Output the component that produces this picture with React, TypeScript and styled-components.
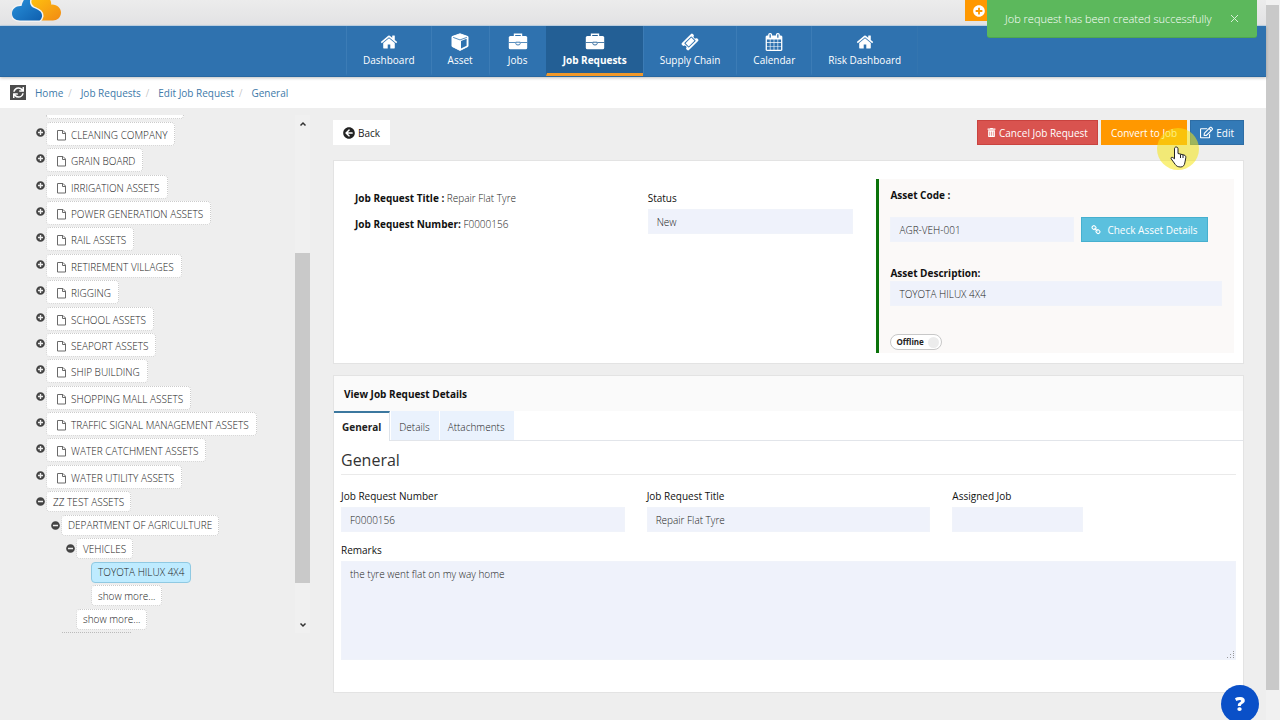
import React from "react";
import styled, { createGlobalStyle } from "styled-components";
import { FaPlusCircle, FaMinusCircle, FaArrowCircleLeft, FaTrashAlt, FaRegEdit, FaSync } from "react-icons/fa";

const Global = createGlobalStyle`
  * { box-sizing: border-box; }
  html, body, #root { height: 100%; margin: 0; }
  body {
    overflow: hidden;
    background: #eeeeee;
    font: 300 10px/16px "Open Sans", "Liberation Sans", sans-serif;
    color: #222;
  }
  button, input, textarea { font: inherit; color: inherit; margin: 0; border-radius: 0; }
  button { cursor: pointer; }
`;

const Screen = styled.div`
  display: flex;
  height: 100vh;
  overflow: hidden;
`;
const Page = styled.div`
  flex: 1;
  min-width: 0;
  display: flex;
  flex-direction: column;
`;
const PageScroll = styled.div`
  flex: none;
  width: 14px;
  padding: 5px 1px 30px 0;
  background: #f1f1f1;
`;
const ScrollThumb = styled.div`
  height: 100%;
  background: #c9c9c9;
`;

const TopBar = styled.header`
  flex: none;
  height: 26px;
  padding: 0 12px;
  background: linear-gradient(#ececec, #e2e2e4);
  border-bottom: 1px solid #c4d8ea;
  display: flex;
  align-items: flex-start;
  justify-content: space-between;
`;
const AddButton = styled.button`
  width: 60px;
  height: 21px;
  margin-right: 229px;
  padding: 0 8px;
  border: 0;
  background: #ff9800;
  color: #fff;
  display: flex;
  align-items: center;
`;

const Nav = styled.nav`
  flex: none;
  height: 51px;
  padding-left: 346px;
  display: flex;
  background: #2f72af;
  border-bottom: 1px solid #2868a2;
  box-shadow: 0 1px 3px rgba(0, 0, 0, 0.25);
  z-index: 1;
`;
const NavLink = styled.a<{ $active?: boolean }>`
  min-width: 57px;
  padding: 7px 16px 0;
  display: flex;
  flex-direction: column;
  align-items: center;
  gap: 1px;
  color: #fff;
  text-decoration: none;
  font-weight: ${(p) => (p.$active ? 700 : 400)};
  background: ${(p) => (p.$active ? "#235f95" : "transparent")};
  border-left: 1px solid ${(p) => (p.$active ? "#235f95" : "#3c7cb6")};
  border-bottom: 3px solid ${(p) => (p.$active ? "#f0982a" : "transparent")};
  &:last-child { border-right: 1px solid #3475af; }
`;

const Crumbs = styled.nav`
  flex: none;
  height: 31px;
  padding-left: 10px;
  display: flex;
  align-items: center;
  background: #fff;
  a { color: #4079a9; text-decoration: none; font-weight: 400; }
  span { color: #aaa; margin: 0 9px 0 5px; }
`;
const Refresh = styled.button`
  width: 16px;
  height: 15px;
  padding: 0;
  margin-right: 9px;
  border: 0;
  background: #4c4c4c;
  color: #fff;
  display: flex;
  align-items: center;
  justify-content: center;
`;

const Body = styled.div`
  flex: 1;
  min-height: 0;
  display: flex;
  padding-right: 22px;
`;
const Side = styled.aside`
  flex: none;
  width: 333px;
  height: 525px;
  padding: 7px 23px 0 36px;
  display: flex;
`;
const TreeView = styled.div`
  flex: 1;
  min-width: 0;
  overflow: hidden;
  display: flex;
  flex-direction: column;
`;
const TreeScroll = styled.div`
  flex: none;
  width: 15px;
  background: #f0f0f0;
  display: flex;
  flex-direction: column;
  align-items: center;
  padding: 5px 0 4px;
`;
const TreeThumb = styled.div`
  width: 15px;
  height: 330px;
  margin: auto 0 38px;
  background: #c9c9c9;
`;
const CutTop = styled.div`
  flex: none;
  width: 138px;
  height: 4px;
  margin: 0 0 3px 10px;
  background: #fff;
  border: 1px dotted #ccc;
  border-top: 0;
  border-radius: 0 0 4px 4px;
`;
const CutBottom = styled.div`
  flex: none;
  width: 69px;
  height: 1px;
  margin-left: 26px;
  border-top: 1px dotted #bbb;
`;
const TreeList = styled.div<{ $height: number }>`
  flex: none;
  height: ${(p) => p.$height}px;
  display: grid;
  grid-auto-rows: 1fr;
`;
const TreeRow = styled.div<{ $level: number }>`
  padding-left: ${(p) => p.$level * 15}px;
  display: flex;
  align-items: flex-start;
`;
const Toggle = styled.button<{ $tall?: boolean }>`
  flex: none;
  width: 10px;
  height: 21px;
  padding: 0;
  border: 0;
  background: none;
  color: #444;
  display: flex;
  align-items: center;
`;
const TreeLabel = styled.button<{ $tall?: boolean; $selected?: boolean }>`
  height: ${(p) => (p.$tall ? 24 : 21)}px;
  padding: ${(p) => (p.$tall ? "2px 7px 0 9px" : "0 6px")};
  border: 1px ${(p) => (p.$selected ? "solid #8fc9e2" : "dotted #ccc")};
  border-radius: 4px;
  background: ${(p) => (p.$selected ? "#beebff" : "#fff")};
  display: flex;
  align-items: center;
  gap: 4px;
  white-space: nowrap;
`;

const Content = styled.main`
  flex: 1;
  min-width: 0;
  padding-top: 12px;
`;
const Actions = styled.div`
  display: flex;
  gap: 3px;
  margin-bottom: 15px;
`;
const Button = styled.button<{ $bg: string; $fg?: string; $edge?: string }>`
  height: 25px;
  padding: 0 9px;
  border: 1px solid ${(p) => p.$edge ?? p.$bg};
  background: ${(p) => p.$bg};
  color: ${(p) => p.$fg ?? "#fff"};
  font-weight: 400;
  white-space: nowrap;
  display: flex;
  align-items: center;
  gap: 3px;
`;
const AssetButton = styled(Button)`
  gap: 6px;
`;
const Spacer = styled.div`
  flex: 1;
`;

const Card = styled.section`
  background: #fff;
  border: 1px solid #e3e3e3;
`;
const Summary = styled(Card)`
  height: 204px;
  margin-bottom: 11px;
  padding: 18px 9px 10px 21px;
  display: grid;
  grid-template-columns: 293fr 206fr 381fr;
`;
const Facts = styled.div`
  padding-top: 11px;
  display: flex;
  flex-direction: column;
  gap: 10px;
  strong { font-weight: 700; color: #111; }
`;
const Field = styled.div<{ $gap?: number }>`
  display: flex;
  flex-direction: column;
  gap: ${(p) => p.$gap ?? 3}px;
`;
const Label = styled.label<{ $bold?: boolean }>`
  font-weight: ${(p) => (p.$bold ? 700 : 400)};
  color: #111;
`;
const Input = styled.input`
  width: 100%;
  height: 25px;
  padding: 0 8px;
  border: 1px solid #f0f3fa;
  background: #eff2fb;
  outline: 0;
`;
const AssetPanel = styled.div`
  margin-left: 23px;
  padding: 8px 12px 0 11px;
  border-left: 3px solid #0a720a;
  background: #fbf9f8;
`;
const AssetLine = styled.div`
  display: grid;
  grid-template-columns: 184px auto;
  justify-content: start;
  gap: 7px;
  margin: 14px 0 23px;
`;
const Switch = styled.label`
  width: 52px;
  height: 16px;
  margin-top: 28px;
  padding: 0 2px 0 5px;
  border: 1px solid #c8c8c8;
  border-radius: 8px;
  background: #fff;
  font-size: 8px;
  font-weight: 700;
  display: flex;
  align-items: center;
  justify-content: space-between;
  input {
    appearance: none;
    width: 11px;
    height: 11px;
    margin: 0;
    border-radius: 50%;
    background: #ececec;
  }
`;

const Details = styled(Card)`
  height: 318px;
`;
const DetailsTitle = styled.h2`
  margin: 0;
  height: 35px;
  padding: 0 10px;
  background: #fafafa;
  font-size: 10px;
  line-height: 36px;
  font-weight: 700;
  color: #111;
`;
const Tabs = styled.div`
  height: 30px;
  display: flex;
  gap: 1px;
  border-bottom: 1px solid #e2e5ea;
`;
const Tab = styled.button<{ $active?: boolean }>`
  height: ${(p) => (p.$active ? 30 : 29)}px;
  padding: 0 8px;
  border: 0;
  border-top: 2px solid ${(p) => (p.$active ? "#3c789f" : "#eaf2fd")};
  border-right: 1px solid ${(p) => (p.$active ? "#dde3ea" : "#eaf2fd")};
  background: ${(p) => (p.$active ? "#fff" : "#eaf2fd")};
  font-weight: ${(p) => (p.$active ? 700 : 300)};
`;
const TabBody = styled.div`
  padding: 7px 7px 0;
`;
const Heading = styled.h3`
  margin: 0 0 13px;
  padding-bottom: 2px;
  border-bottom: 1px solid #eaeaea;
  font-size: 16px;
  line-height: 24px;
  font-weight: 400;
  color: #333;
`;
const FormGrid = styled.div`
  display: grid;
  grid-template-columns: 1fr 1fr 1fr;
  column-gap: 22px;
  margin-bottom: 10px;
`;
const ShortField = styled(Field)`
  width: 46%;
`;
const TextArea = styled.textarea`
  display: block;
  width: 100%;
  height: 99px;
  padding: 4px 8px;
  border: 1px solid #f0f3fa;
  background: #eff2fb;
  outline: 0;
  resize: none;
`;
const AreaWrap = styled.div`
  position: relative;
  svg { position: absolute; right: 1px; bottom: 1px; }
`;

const Toast = styled.div`
  position: fixed;
  top: 0;
  right: 23px;
  width: 270px;
  height: 38px;
  padding: 0 18px;
  background: #5cb85c;
  border-bottom: 1px solid #4fa74f;
  border-radius: 0 0 3px 3px;
  color: #fff;
  font-size: 11px;
  display: flex;
  align-items: center;
  justify-content: space-between;
  z-index: 3;
`;
const ToastClose = styled.button`
  padding: 0;
  border: 0;
  background: none;
  color: #d8f0d8;
  display: flex;
`;
const Help = styled.button`
  position: fixed;
  right: 21px;
  bottom: -3px;
  width: 38px;
  height: 38px;
  padding: 0;
  border: 0;
  border-radius: 50%;
  background: #0a50c8;
  color: #fff;
  font-size: 20px;
  font-weight: 800;
  z-index: 3;
`;
const Pointer = styled.div`
  position: fixed;
  top: 127px;
  left: 1156px;
  width: 44px;
  height: 44px;
  pointer-events: none;
  z-index: 3;
`;

const PATHS = {
  home: "M1472 992v480q0 26-19 45t-45 19h-384v-384h-256v384h-384q-26 0-45-19t-19-45v-480q0-1 .5-3t.5-3l575-474 575 474q1 2 1 6zm223-69l-62 74q-8 9-21 11h-3q-13 0-21-7l-692-577-692 577q-12 8-24 7-13-2-21-11l-62-74q-8-10-7-23.5t11-21.5l719-599q32-26 76-26t76 26l244 204v-195q0-14 9-23t23-9h192q14 0 23 9t9 23v408l219 182q10 8 11 21.5t-7 23.5z",
  ticket: "M1024 452l316 316-572 572-316-316zm-211 979l618-618q19-19 19-45t-19-45l-362-362q-18-18-45-18t-45 18l-618 618q-19 19-19 45t19 45l362 362q18 18 45 18t45-18zm889-637l-907 908q-37 37-90.5 37t-90.5-37l-126-126q56-56 56-136t-56-136-136-56-136 56l-125-126q-37-37-37-90.5t37-90.5l907-906q37-37 90.5-37t90.5 37l125 125q-56 56-56 136t56 136 136 56 136-56l126 125q37 37 37 90.5t-37 90.5z",
  calendar: "M192 1664h288v-288h-288v288zm352 0h320v-288h-320v288zm-352-352h288v-320h-288v320zm352 0h320v-320h-320v320zm-352-384h288v-288h-288v288zm736 736h320v-288h-320v288zm-384-736h320v-288h-320v288zm768 736h288v-288h-288v288zm-384-352h320v-320h-320v320zm-352-864v-288q0-13-9.5-22.5t-22.5-9.5h-64q-13 0-22.5 9.5t-9.5 22.5v288q0 13 9.5 22.5t22.5 9.5h64q13 0 22.5-9.5t9.5-22.5zm736 864h288v-320h-288v320zm-384-384h320v-288h-320v288zm384 0h288v-288h-288v288zm32-480v-288q0-13-9.5-22.5t-22.5-9.5h-64q-13 0-22.5 9.5t-9.5 22.5v288q0 13 9.5 22.5t22.5 9.5h64q13 0 22.5-9.5t9.5-22.5zm384-64v1280q0 52-38 90t-90 38h-1408q-52 0-90-38t-38-90v-1280q0-52 38-90t90-38h128v-96q0-66 47-113t113-47h64q66 0 113 47t47 113v96h384v-96q0-66 47-113t113-47h64q66 0 113 47t47 113v96h128q52 0 90 38t38 90z",
  link: "M1520 1216q0-40-28-68l-208-208q-28-28-68-28-42 0-72 32 3 3 19 18.5t21.5 21.5 15 19 13 25.5 3.5 27.5q0 40-28 68t-68 28q-15 0-27.5-3.5t-25.5-13-19-15-21.5-21.5-18.5-19q-33 31-33 73 0 40 28 68l206 207q27 27 68 27 40 0 68-26l147-146q28-28 28-67zm-703-705q0-40-28-68l-206-207q-28-28-68-28-39 0-68 27l-147 146q-28 28-28 67 0 40 28 68l208 208q27 27 68 27 42 0 72-31-3-3-19-18.5t-21.5-21.5-15-19-13-25.5-3.5-27.5q0-40 28-68t68-28q15 0 27.5 3.5t25.5 13 19 15 21.5 21.5 18.5 19q33-31 33-73zm895 705q0 120-85 203l-147 146q-83 83-203 83-121 0-204-85l-206-207q-83-83-83-203 0-123 88-209l-88-88q-86 88-208 88-120 0-204-84l-208-208q-84-84-84-204t85-203l147-146q83-83 203-83 121 0 204 85l206 207q83 83 83 203 0 123-88 209l88 88q86-88 208-88 120 0 204 84l208 208q84 84 84 204z",
};

const Glyph = ({ d, size = 18 }: { d: string; size?: number }) => (
  <svg width={size} height={size} viewBox="0 0 1792 1792" fill="currentColor" aria-hidden="true">
    <path d={d} />
  </svg>
);
const Cube = () => (
  <svg width="18" height="18" viewBox="0 0 18 18" aria-hidden="true">
    <path d="M9 .8 17 3.600V13.400L9 17.400 1 13.400V3.600Z" fill="#fff" stroke="#fff" strokeLinejoin="round" />
    <path d="M9 2 14.800 4.100 9 6.200 3.200 4.100Z" fill="#fff" />
    <path d="M10 8 15.600 5.800v6.900L10 15.600Z" fill="#2f72af" />
    <path d="M2.200 4.400 9 6.900l6.800-2.500" stroke="#2f72af" strokeWidth=".8" fill="none" />
  </svg>
);
const Briefcase = ({ back }: { back: string }) => (
  <svg width="20" height="18" viewBox="0 0 20 18" aria-hidden="true">
    <path d="M6.500 3.500V1.200h7v2.300" fill="none" stroke="#fff" strokeWidth="1.400" />
    <rect x=".8" y="3" width="18.400" height="13.200" rx="1.500" fill="#fff" />
    <path d="M.8 9.500H7.500M12.500 9.500H19.200" stroke={back} strokeWidth=".8" />
    <path d="M7.800 9.200h4.400v1.300a2.200 1.500 0 0 1-4.400 0z" fill="#fff" stroke={back} strokeWidth=".9" />
  </svg>
);
const FileIcon = () => (
  <svg width="11" height="12" viewBox="0 0 11 12" fill="none" stroke="#6a6a6a" aria-hidden="true">
    <path d="M1.500 1.500h5.500l2.500 2.500v7h-8z M6.500 1.500v3h3" />
  </svg>
);
const Logo = () => (
  <svg width="50" height="22" viewBox="0 0 50 22" role="img" aria-label="Cloud logo">
    <defs>
      <linearGradient id="cloudBlue" x1="0" y1="0" x2="1" y2="1">
        <stop offset="0" stopColor="#2a93dc" />
        <stop offset="1" stopColor="#0f5fae" />
      </linearGradient>
      <linearGradient id="cloudOrange" x1="0" y1="0" x2="1" y2="1">
        <stop offset="0" stopColor="#ffc30f" />
        <stop offset="1" stopColor="#f28a14" />
      </linearGradient>
    </defs>
    <path d="M18 -2H37C39 1 39.500 2.500 39 4.500 45 4 49 8 49 12.500 49 17.500 45 20.500 41 20.500H28V10L18 6Z" fill="url(#cloudOrange)" />
    <path d="M8 20.500C3 20.500 0 17.500 0 13.500 0 9 4 5.500 9.500 6 10 3 11.500 0 14 -3H19.500C17 1 17.500 5 21 7.500 26 10 30.500 11 30 16.500 29.500 19 28.500 20 27.500 20.500Z" fill="none" stroke="#f3f3f3" strokeWidth="3" />
    <path d="M8 20.500C3 20.500 0 17.500 0 13.500 0 9 4 5.500 9.500 6 10 3 11.500 0 14 -3H19.500C17 1 17.500 5 21 7.500 26 10 30.500 11 30 16.500 29.500 19 28.500 20 27.500 20.500Z" fill="url(#cloudBlue)" />
  </svg>
);
const Chevron = ({ up }: { up?: boolean }) => (
  <svg width="8" height="8" viewBox="0 0 8 8" fill="none" stroke="#333" strokeWidth="1.500" aria-hidden="true">
    <path d={up ? "M1.500 5.500 4 3l2.500 2.500" : "M1.500 2.500 4 5l2.500-2.500"} />
  </svg>
);

const NAV = [
  { text: "Dashboard", icon: <Glyph d={PATHS.home} /> },
  { text: "Asset", icon: <Cube /> },
  { text: "Jobs", icon: <Briefcase back="#2f72af" /> },
  { text: "Job Requests", icon: <Briefcase back="#235f95" />, active: true },
  { text: "Supply Chain", icon: <Glyph d={PATHS.ticket} /> },
  { text: "Calendar", icon: <Glyph d={PATHS.calendar} /> },
  { text: "Risk Dashboard", icon: <Glyph d={PATHS.home} /> },
];
const FOLDERS = [
  "CLEANING COMPANY", "GRAIN BOARD", "IRRIGATION ASSETS", "POWER GENERATION ASSETS", "RAIL ASSETS",
  "RETIREMENT VILLAGES", "RIGGING", "SCHOOL ASSETS", "SEAPORT ASSETS", "SHIP BUILDING",
  "SHOPPING MALL ASSETS", "TRAFFIC SIGNAL MANAGEMENT ASSETS", "WATER CATCHMENT ASSETS", "WATER UTILITY ASSETS",
];
const BRANCH = [
  { text: "ZZ TEST ASSETS", level: 0, open: true },
  { text: "DEPARTMENT OF AGRICULTURE", level: 1, open: true },
  { text: "VEHICLES", level: 2, open: true },
  { text: "TOYOTA HILUX 4X4", level: 3, selected: true },
  { text: "show more...", level: 3 },
  { text: "show more...", level: 2 },
];
const CRUMBS = ["Home", "Job Requests", "Edit Job Request", "General"];

export default function App() {
  return (
    <Screen>
      <Global />
      <Page>
        <TopBar>
          <Logo />
          <AddButton aria-label="Add"><FaPlusCircle size={12} /></AddButton>
        </TopBar>
        <Nav>
          {NAV.map((n) => (
            <NavLink key={n.text} href="#" $active={n.active}>
              {n.icon}
              {n.text}
            </NavLink>
          ))}
        </Nav>
        <Crumbs aria-label="Breadcrumb">
          <Refresh aria-label="Refresh"><FaSync size={11} /></Refresh>
          {CRUMBS.map((c, i) => (
            <React.Fragment key={c}>
              {i > 0 && <span>/</span>}
              <a href="#">{c}</a>
            </React.Fragment>
          ))}
        </Crumbs>
        <Body>
          <Side>
            <TreeView>
              <CutTop />
              <TreeList $height={369}>
                {FOLDERS.map((f) => (
                  <TreeRow key={f} $level={0}>
                    <Toggle aria-label={`Expand ${f}`}><FaPlusCircle size={9} /></Toggle>
                    <TreeLabel $tall><FileIcon />{f}</TreeLabel>
                  </TreeRow>
                ))}
              </TreeList>
              <TreeList $height={141}>
                {BRANCH.map((b, i) => (
                  <TreeRow key={i} $level={b.level}>
                    {b.open ? (
                      <Toggle aria-label={`Collapse ${b.text}`}><FaMinusCircle size={9} /></Toggle>
                    ) : (
                      <Toggle as="span" />
                    )}
                    <TreeLabel $selected={b.selected}>{b.text}</TreeLabel>
                  </TreeRow>
                ))}
              </TreeList>
              <CutBottom />
            </TreeView>
            <TreeScroll>
              <Chevron up />
              <TreeThumb />
              <Chevron />
            </TreeScroll>
          </Side>
          <Content>
            <Actions>
              <Button $bg="#fff" $fg="#222"><FaArrowCircleLeft size={12} />Back</Button>
              <Spacer />
              <Button $bg="#d9534f" $edge="#c9433f"><FaTrashAlt size={9} />Cancel Job Request</Button>
              <Button $bg="#ff9800">Convert to Job</Button>
              <Button $bg="#337ab7" $edge="#2e6da4"><FaRegEdit size={13} />Edit</Button>
            </Actions>
            <Summary>
              <Facts>
                <div><strong>Job Request Title :</strong> Repair Flat Tyre</div>
                <div><strong>Job Request Number:</strong> F0000156</div>
              </Facts>
              <Facts>
                <Field>
                  <Label htmlFor="status">Status</Label>
                  <Input id="status" defaultValue="New" readOnly />
                </Field>
              </Facts>
              <AssetPanel>
                <Label $bold htmlFor="code">Asset Code :</Label>
                <AssetLine>
                  <Input id="code" defaultValue="AGR-VEH-001" readOnly />
                  <AssetButton $bg="#5bc0de" $edge="#46b0cf"><Glyph d={PATHS.link} size={10} />Check Asset Details</AssetButton>
                </AssetLine>
                <Field $gap={0}>
                  <Label $bold htmlFor="description">Asset Description:</Label>
                  <Input id="description" defaultValue="TOYOTA HILUX 4X4" readOnly />
                </Field>
                <Switch>Offline<input type="checkbox" role="switch" /></Switch>
              </AssetPanel>
            </Summary>
            <Details>
              <DetailsTitle>View Job Request Details</DetailsTitle>
              <Tabs role="tablist">
                <Tab role="tab" aria-selected="true" $active>General</Tab>
                <Tab role="tab">Details</Tab>
                <Tab role="tab">Attachments</Tab>
              </Tabs>
              <TabBody>
                <Heading>General</Heading>
                <FormGrid>
                  <Field>
                    <Label htmlFor="number">Job Request Number</Label>
                    <Input id="number" defaultValue="F0000156" readOnly />
                  </Field>
                  <Field>
                    <Label htmlFor="title">Job Request Title</Label>
                    <Input id="title" defaultValue="Repair Flat Tyre" readOnly />
                  </Field>
                  <ShortField>
                    <Label htmlFor="job">Assigned Job</Label>
                    <Input id="job" readOnly />
                  </ShortField>
                </FormGrid>
                <Field>
                  <Label htmlFor="remarks">Remarks</Label>
                  <AreaWrap>
                    <TextArea id="remarks" defaultValue="the tyre went flat on my way home" readOnly />
                    <svg width="9" height="9" viewBox="0 0 9 9" fill="#999" aria-hidden="true">
                      <path d="M7 1h1v1H7zM7 3h1v1H7zM7 5h1v1H7zM7 7h1v1H7zM4 4h1v1H4zM4 7h1v1H4zM1 7h1v1H1z" />
                    </svg>
                  </AreaWrap>
                </Field>
              </TabBody>
            </Details>
          </Content>
        </Body>
      </Page>
      <PageScroll><ScrollThumb /></PageScroll>
      <Toast role="status">
        Job request has been created successfully
        <ToastClose aria-label="Close">
          <svg width="9" height="9" viewBox="0 0 9 9" stroke="currentColor" aria-hidden="true"><path d="M1 1l7 7M8 1 1 8" /></svg>
        </ToastClose>
      </Toast>
      <Pointer>
        <svg width="44" height="44" viewBox="0 0 44 44" aria-hidden="true">
          <circle cx="22" cy="22" r="21" fill="#f5e614" fillOpacity=".55" />
          <path d="M18 20c1.500 0 2 .8 2 2v4.500l6 1.500c1.500.4 2 1.300 1.800 2.800l-1 5.200c-.3 2-1.500 4-4 4-3 0-4.500-1-5.500-2.500l-4-5.500c-.8-1.200.2-2.200 1.500-1.500l1.700 1.300v-9.800c0-1.200.5-2 1.500-2z" transform="translate(2 0)" fill="#fff" stroke="#222" />
          <path d="M24.500 27.500v3.500M27 28v3" stroke="#222" fill="none" />
        </svg>
      </Pointer>
      <Help aria-label="Help">?</Help>
    </Screen>
  );
}
